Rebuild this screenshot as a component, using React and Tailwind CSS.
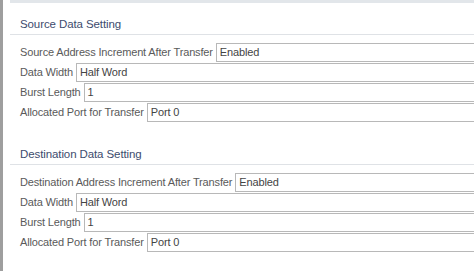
import React from "react";

function Row({ label, value }) {
  return (
    <div className="flex h-[20px] items-start">
      <span className="pl-[10px] pr-[3px] leading-[19px] text-[#5a5a5a] whitespace-nowrap tracking-[-0.15px]">{label}</span>
      <div className="flex-1 h-[19px] border border-r-0 border-[#b8b8b8] bg-white pl-[3px] leading-[17px] text-[#444] whitespace-nowrap tracking-[-0.15px]">
        {value}
      </div>
    </div>
  );
}

function Section({ title, rows, top }) {
  return (
    <div>
      <div className={`${top} border-b border-[#dfe2e6] pl-[10px] text-[11.5px] text-[#3d4c6e] leading-[14px] pb-[3px] tracking-[-0.1px]`}>
        {title}
      </div>
      <div className="pt-[8px]">
        {rows.map((r, i) => (
          <Row key={i} label={r[0]} value={r[1]} />
        ))}
      </div>
    </div>
  );
}

export default function App() {
  return (
    <div
      className="w-[474px] h-[271px] bg-white border-l-[3px] border-[#9e9e9e] overflow-hidden text-[11px]"
      style={{ fontFamily: '"Liberation Sans", Arial, sans-serif' }}
    >
      <div className="pl-[7px]">
        <div className="h-[3px] bg-[#e2e6ea]" />
        <Section
          title="Source Data Setting"
          top="pt-[14px]"
          rows={[
            ["Source Address Increment After Transfer", "Enabled"],
            ["Data Width", "Half Word"],
            ["Burst Length", "1"],
            ["Allocated Port for Transfer", "Port 0"],
          ]}
        />
        <Section
          title="Destination Data Setting"
          top="pt-[24px]"
          rows={[
            ["Destination Address Increment After Transfer", "Enabled"],
            ["Data Width", "Half Word"],
            ["Burst Length", "1"],
            ["Allocated Port for Transfer", "Port 0"],
          ]}
        />
      </div>
    </div>
  );
}
